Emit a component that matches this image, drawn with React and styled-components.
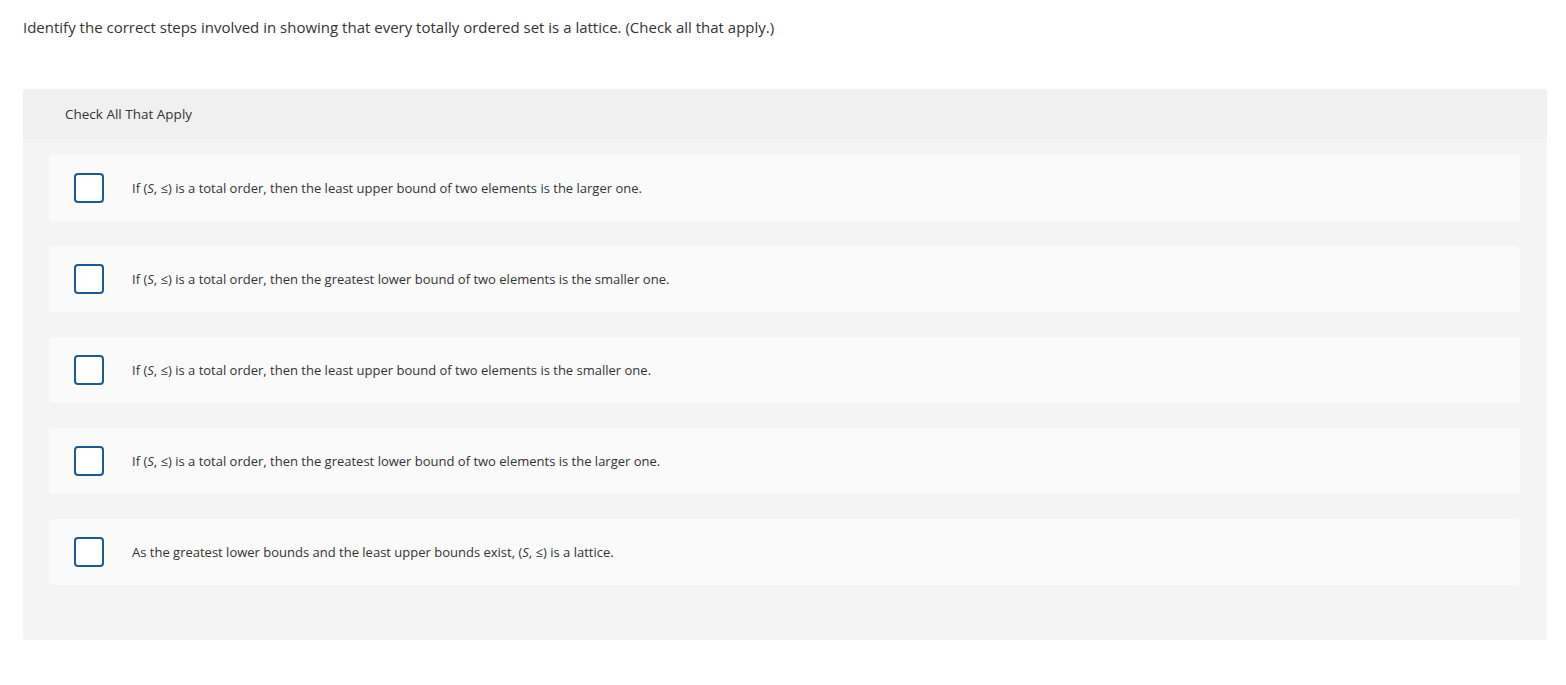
import React from 'react';
import styled, { createGlobalStyle } from 'styled-components';

const GlobalStyle = createGlobalStyle`
	body {
		margin: 0;
		background: #fff;
		font-family: "Open Sans", Lato, sans-serif;
		color: #333;
	}
`;

const Page = styled.div`
	padding: 17px 19px 0 23px;
`;

const Prompt = styled.p`
	margin: 0 0 52px;
	font-size: 15px;
	line-height: 20px;
	color: #333;
`;

const Panel = styled.section`
	background: #f4f4f4;
	border-radius: 3px;
	overflow: hidden;
	padding-bottom: 55px;
`;

const PanelHeader = styled.div`
	height: 50px;
	display: flex;
	align-items: center;
	padding-left: 42px;
	background: #f0f0f0;
	font-size: 13.5px;
	color: #333;
`;

const Options = styled.div`
	display: flex;
	flex-direction: column;
	gap: 25px;
	padding: 16px 27px 0 26px;
`;

const Option = styled.label`
	height: 66px;
	display: flex;
	align-items: center;
	gap: 28px;
	padding-left: 25px;
	background: #fafafa;
	border-radius: 3px;
	font-size: 13px;
	color: #333;
	cursor: pointer;
`;

const Box = styled.span`
	width: 30px;
	height: 30px;
	box-sizing: border-box;
	flex-shrink: 0;
	border: 2px solid #1d5a94;
	border-radius: 4px;
	background: #fff;
`;

const Relation = () => (
	<>(<i>S</i>, ≤)</>
);

const options = [
	<>If <Relation /> is a total order, then the least upper bound of two elements is the larger one.</>,
	<>If <Relation /> is a total order, then the greatest lower bound of two elements is the smaller one.</>,
	<>If <Relation /> is a total order, then the least upper bound of two elements is the smaller one.</>,
	<>If <Relation /> is a total order, then the greatest lower bound of two elements is the larger one.</>,
	<>As the greatest lower bounds and the least upper bounds exist, <Relation /> is a lattice.</>,
];

const App = () => (
	<Page>
		<GlobalStyle />
		<Prompt>Identify the correct steps involved in showing that every totally ordered set is a lattice. (Check all that apply.)</Prompt>
		<Panel>
			<PanelHeader>Check All That Apply</PanelHeader>
			<Options>
				{options.map((text, i) => (
					<Option key={i}>
						<Box />
						<span>{text}</span>
					</Option>
				))}
			</Options>
		</Panel>
	</Page>
);

export default App;
